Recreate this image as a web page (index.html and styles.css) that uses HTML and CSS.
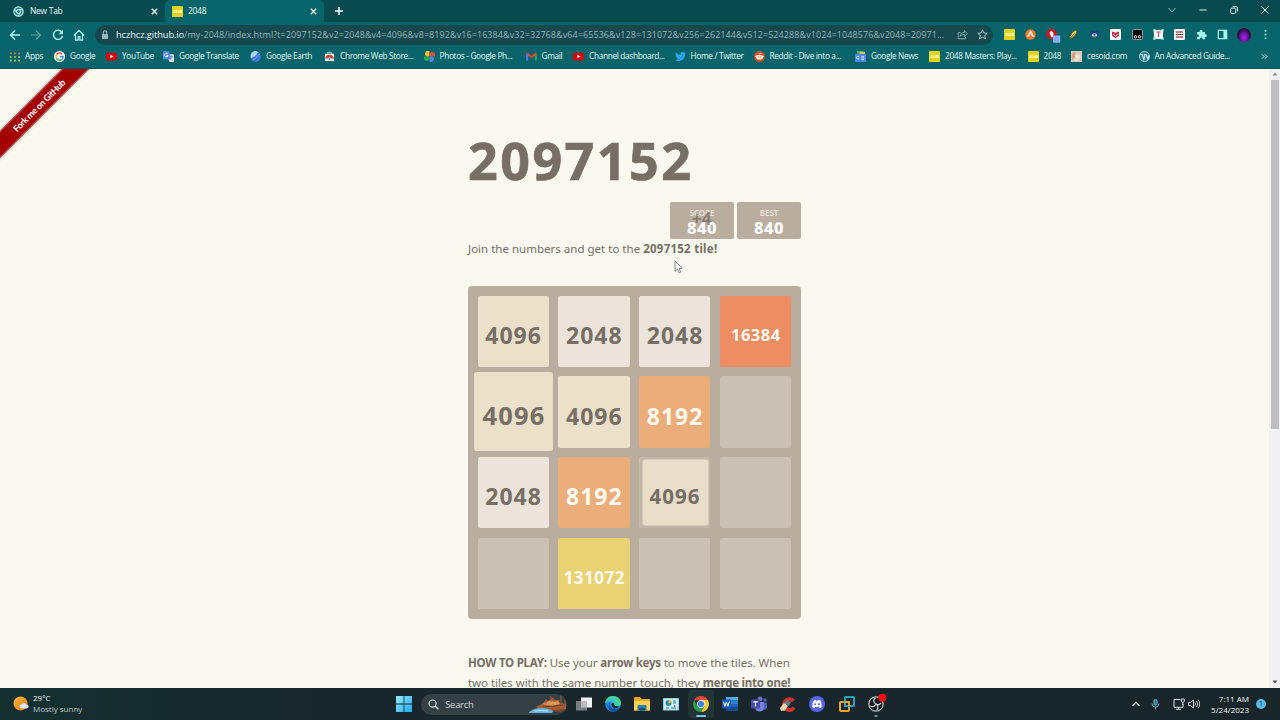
FILE: index.html
```html
<!DOCTYPE html>
<html lang="en">
<head>
<meta charset="utf-8">
<title>2048</title>
<link rel="stylesheet" href="styles.css">
</head>
<body>
<svg class="defs" aria-hidden="true">
  <symbol id="i2048" viewBox="0 0 12 12"><rect width="12" height="12" rx=".5" fill="#e4d21c"/><text x="6" y="7.7" text-anchor="middle" font-size="4.6" font-weight="700" textLength="10" fill="#fffbd0">2048</text></symbol>
  <symbol id="yt" viewBox="0 0 12 12"><rect x="0" y="1.8" width="12" height="8.6" rx="2" fill="#d8000d"/><path d="M4.7 4v4l3.4-2z" fill="#fff"/></symbol>
  <symbol id="close" viewBox="0 0 10 10"><path d="M2 2l6 6M8 2l-6 6" stroke="#e6fbfa" stroke-width="1.5"/></symbol>
</svg>
<div class="screen">
<header class="browser">
  <div class="tabs">
    <div class="tab idle">
      <svg class="fav" viewBox="0 0 12 12"><circle cx="6" cy="6" r="5" fill="#2b7f82" stroke="#b7f4ee" stroke-width="1.4"/><circle cx="6" cy="6" r="2.1" fill="#0a5155" stroke="#c9fbf5" stroke-width="1.2"/><path d="M6 3.9h4.5M4.2 7L2 3.3M7.8 7l-2.1 4" stroke="#b7f4ee"/></svg>
      <span>New Tab</span><svg class="x"><use href="#close"/></svg>
    </div>
    <div class="tab active">
      <svg class="fav"><use href="#i2048"/></svg>
      <span>2048</span><svg class="x"><use href="#close"/></svg>
    </div>
    <svg class="plus" viewBox="0 0 10 10"><path d="M5 1v8M1 5h8" stroke="#eefdfc" stroke-width="1.5"/></svg>
    <div class="wbtns">
      <svg viewBox="0 0 10 10"><path d="M1.5 3L5 6.8 8.500 3" fill="none" stroke="#9fc9c9"/></svg>
      <svg viewBox="0 0 10 10"><path d="M1.500 5h7" stroke="#d6e9e9"/></svg>
      <svg viewBox="0 0 10 10"><rect x="1.700" y="3.200" width="5" height="5.200" rx="1" fill="none" stroke="#d6e9e9"/><path d="M3.500 1.700h3.700q1.200 0 1.200 1.200v3.600" fill="none" stroke="#d6e9e9"/></svg>
      <svg viewBox="0 0 10 10"><path d="M1.500 1.500l7 7M8.500 1.500l-7 7" stroke="#e4f2f2"/></svg>
    </div>
  </div>
  <div class="toolbar">
    <div class="nav">
      <svg viewBox="0 0 12 12"><path d="M11 6H2M6 1.500L1.500 6 6 10.500" fill="none" stroke="#aef7ef" stroke-width="1.400"/></svg>
      <svg viewBox="0 0 12 12"><path d="M1 6h9M6 1.500L10.500 6 6 10.500" fill="none" stroke="#5aa5a3" stroke-width="1.200"/></svg>
      <svg viewBox="0 0 12 12"><path d="M10 3.400A4.600 4.600 0 1 0 10.500 7" fill="none" stroke="#aef7ef" stroke-width="1.400"/><path d="M10.900 .8v4.400H6.600z" fill="#aef7ef"/></svg>
      <svg viewBox="0 0 12 12"><path d="M.8 6.500L6 1.300l5.200 5.200M2.500 5.500v5.700h2.600V7.600h1.800v3.600h2.600V5.500" fill="none" stroke="#aef7ef" stroke-width="1.200"/></svg>
    </div>
    <div class="omni">
      <svg class="lock" viewBox="0 0 8 10"><rect x="1" y="4" width="6" height="5" rx=".6" fill="#9db7b9"/><path d="M2.300 4.300V2.600a1.700 1.700 0 0 1 3.400 0v1.700" fill="none" stroke="#9db7b9" stroke-width="1.100"/></svg>
      <span class="url"><b>hczhcz.github.io</b>/my-2048/index.html?t=2097152&amp;v2=2048&amp;v4=4096&amp;v8=8192&amp;v16=16384&amp;v32=32768&amp;v64=65536&amp;v128=131072&amp;v256=262144&amp;v512=524288&amp;v1024=1048576&amp;v2048=20971...</span>
      <div class="omni-act">
        <svg viewBox="0 0 12 12"><path d="M4 4H1.300v6.700h8V8.500M3.500 8c.3-3 2-4.300 4.500-4.300V1.500L11.300 5 8 8V6C6 6 4.500 6.500 3.500 8z" fill="none" stroke="#88b1b3" stroke-width="1"/></svg>
        <svg viewBox="0 0 12 12"><path d="M6 1l1.500 3.300 3.600.4-2.700 2.400.8 3.600L6 8.900l-3.200 1.800.8-3.600L.9 4.700l3.600-.4z" fill="none" stroke="#a8d4d4" stroke-width="1"/></svg>
      </div>
    </div>
    <div class="ext">
      <svg><use href="#i2048"/></svg>
      <svg viewBox="0 0 12 12"><circle cx="6" cy="6" r="5.700" fill="#f17a28"/><path d="M2 8.500L5.600 2q2-.5 1.600 1l3 5.500H7.800L6 5.300 4.300 8.500z" fill="#ffe6cf"/></svg>
      <svg viewBox="0 0 12 12" overflow="visible"><circle cx="5" cy="5.500" r="5.700" fill="#d3131b"/><path d="M3 5V3.500l1.400-1.300 1 .4 1.300.8.5 3-1 2.600H4.500z" fill="#f8f3f1"/><rect x="6.500" y="7" width="8" height="8" rx="1" fill="#84aef5"/></svg>
      <svg viewBox="0 0 12 12"><path d="M2 8.500Q4 3 8.500 1l1.300 2Q9 7 3.500 10.600z" fill="#ead13d" stroke="#514427" stroke-width=".7"/><path d="M2 11l1.500-2L7 5" stroke="#795522" fill="none"/></svg>
      <svg viewBox="0 0 12 12"><rect x="1.500" y="2" width="9" height="8" fill="#18487c"/><path d="M3 7.500a3 3 0 1 1 6 0z" fill="#cfdde0"/><path d="M3.800 8.500h4.500" stroke="#c6af40"/><circle cx="6" cy="6.300" r="1.200" fill="#213f9b"/></svg>
      <svg viewBox="0 0 12 12"><rect width="12" height="12" rx="1" fill="#fffafa"/><path d="M2.300 2.700L6 4.100l3.700-1.400v4.700L6 9.700 2.300 7.400z" fill="#c11932"/><path d="M4.200 5v1.700L6 7.800l1.800-1.100V5" fill="none" stroke="#fff"/></svg>
      <svg viewBox="0 0 12 12"><rect x=".5" y=".5" width="11" height="11" rx="1.500" fill="#040607" stroke="#94abad"/><circle cx="3.800" cy="8.500" r="1.300" fill="none" stroke="#fff"/><circle cx="8.200" cy="8.500" r="1.300" fill="none" stroke="#fff"/></svg>
      <svg viewBox="0 0 12 12"><rect x="1" y="1" width="10" height="10" fill="#f7fcfc"/><path d="M3.500 3.300h5M6 3.300v5.500" stroke="#e04550" stroke-width="1.200"/><path d="M.3.300h2.400v2.400H.3zM9.300.300h2.400v2.400H9.300zM.3 9.300h2.400v2.400H.3zM9.300 9.300h2.400v2.400H9.300z" fill="#b8e7f1"/></svg>
      <svg viewBox="0 0 12 12"><rect width="12" height="12" rx="1" fill="#fff8f5"/><path d="M2 3.300h8M2 6h8M2 8.800h8" stroke="#3c3436" stroke-width="1.200"/><path d="M7 2.500v1.700M4 5.200V7M8 8v1.700" stroke="#ed4a4a" stroke-width="1.500"/></svg>
      <svg viewBox="0 0 12 12"><path d="M1.200 3.300h2.900V2.500a1.500 1.500 0 0 1 3 0v.8h2.700v2.500h.5a1.500 1.500 0 0 1 0 3h-.5v2.500H7.200v-.7a1.400 1.400 0 0 0-2.800 0v.7H1.200V8.700H2a1.400 1.400 0 0 0 0-2.800h-.8z" fill="#a5f6ee"/></svg>
      <svg viewBox="0 0 12 12"><rect x="1.500" y="1.500" width="9" height="9" fill="none" stroke="#a5f6ee" stroke-width="1.400"/><path d="M7 1.500h3.500v9H7z" fill="#a5f6ee"/></svg>
      <i class="avatar"></i>
      <svg viewBox="0 0 12 12"><circle cx="6" cy="2" r="1.100" fill="#a5f6ee"/><circle cx="6" cy="6" r="1.100" fill="#a5f6ee"/><circle cx="6" cy="10" r="1.100" fill="#a5f6ee"/></svg>
    </div>
  </div>
  <nav class="bookmarks">
    <a><svg viewBox="0 0 12 12"><g stroke-width="2" stroke-dasharray="2 2.500"><path d="M1 2.500h11" stroke="#d56a54"/><path d="M1 6.500h11" stroke="#80bd65"/><path d="M1 10.500h11" stroke="#cfc04b"/></g></svg>Apps</a>
    <a><svg viewBox="0 0 12 12"><circle cx="6" cy="6" r="6" fill="#fff"/><g fill="none" stroke-width="1.600"><path d="M8.700 3.400A3.800 3.800 0 0 0 2.700 4" stroke="#e8453c"/><path d="M2.700 4a3.800 3.800 0 0 0 0 4" stroke="#f5bd28"/><path d="M2.700 8a3.800 3.800 0 0 0 6 .9" stroke="#36a852"/><path d="M8.700 8.900A4 4 0 0 0 9.800 6H6.200" stroke="#4285f4"/></g></svg>Google</a>
    <a><svg><use href="#yt"/></svg>YouTube</a>
    <a><svg viewBox="0 0 12 12"><path d="M4 3.500h7q1 0 1 1V12H7z" fill="#dce2e6"/><path d="M0 1q0-1 1-1h5.500L9 9H1Q0 9 0 8z" fill="#4b86ef"/><path d="M5.200 3.300A2 2 0 1 0 5.500 5H4" fill="none" stroke="#fff"/><path d="M7.300 6h3.500M9 5v1M10.300 6Q9.500 8.500 8 9.500" fill="none" stroke="#6c7d8d" stroke-width=".7"/></svg>Google Translate</a>
    <a><svg viewBox="0 0 12 12"><circle cx="6" cy="6" r="5.800" fill="#3979df"/><path d="M.8 4Q4-2 9 1.300 6 6 1 8z" fill="#b2d2fb"/><path d="M3 10Q7 8 10.500 3" stroke="#80acf0" fill="none"/></svg>Google Earth</a>
    <a><svg viewBox="0 0 12 12"><path d="M1 3h10v8H1z" fill="#f2f2ee"/><path d="M4 3V1.500h4V3" fill="none" stroke="#cdd7d5"/><path d="M1.500 8.500a4.500 4.500 0 0 1 9 0z" fill="#d8422e"/><path d="M2.500 9.500h7" stroke="#dfe7df" stroke-width="2"/><circle cx="6" cy="8.700" r="1.500" fill="#4e86db" stroke="#fff" stroke-width=".6"/></svg>Chrome Web Store...</a>
    <a><svg viewBox="0 0 12 12"><path d="M6 0v6h-3A3 3 0 0 1 6 0" fill="#f5bc25"/><path d="M12 6H6V3a3 3 0 0 1 6 3" fill="#e84c3d"/><path d="M6 12V6h3a3 3 0 0 1-3 6" fill="#4386f4"/><path d="M0 6h6v3a3 3 0 0 1-6-3" fill="#32a653"/></svg>Photos - Google Ph...</a>
    <a><svg viewBox="0 0 12 12"><path d="M1.300 10.500v-8" stroke="#4285f4" stroke-width="2.200"/><path d="M10.700 10.500v-8" stroke="#34a853" stroke-width="2.200"/><path d="M1 2.500l5 4 5-4" fill="none" stroke="#e64435" stroke-width="2.200"/></svg>Gmail</a>
    <a><svg><use href="#yt"/></svg>Channel dashboard...</a>
    <a><svg viewBox="0 0 12 12"><path d="M0 9.700q2 .1 3.500-1Q1.500 8.300 1.300 7h1Q.5 6.200.600 4.300l1 .3Q0 3 .9 1.500 3 4 6 4.100 5.600 1 8.300 1q1 0 1.800.8L11.600 1.200l-.9 1.500L12 2.500l-1.200 1.400Q10.800 10.700 4 11 2 11 0 9.700z" fill="#2ba3ec"/></svg>Home / Twitter</a>
    <a><svg viewBox="0 0 12 12"><circle cx="6" cy="6" r="5.900" fill="#e64a21"/><ellipse cx="6" cy="6.900" rx="3.700" ry="2.500" fill="#fff"/><circle cx="2.400" cy="5.800" r="1" fill="#fff"/><circle cx="9.600" cy="5.800" r="1" fill="#fff"/><path d="M6 4.500l.5-2 2 .3" fill="none" stroke="#fff" stroke-width=".7"/><circle cx="4.600" cy="6.500" r=".7" fill="#e64a21"/><circle cx="7.400" cy="6.500" r=".7" fill="#e64a21"/></svg>Reddit - Dive into a...</a>
    <a><svg viewBox="0 0 12 12"><path d="M2 0h7v4H2z" fill="#46ad5c"/><path d="M5 1h6v5H5z" fill="#efc33e"/><path d="M0 3h12v9H0z" fill="#4a85ec"/><path d="M4.300 6.300A1.500 1.500 0 1 0 4.500 8H3.500M7 6.200h3M7 7.800h3M7 9.400h3" fill="none" stroke="#f5f8ff" stroke-width=".9"/></svg>Google News</a>
    <a><svg><use href="#i2048"/></svg>2048 Masters: Play...</a>
    <a><svg><use href="#i2048"/></svg>2048</a>
    <a><svg viewBox="0 0 12 12"><path d="M0 0h12v12H0z" fill="#dacabb"/><path d="M1 3l3-2 2 3-3 4-2 3z" fill="#d89e83"/><path d="M5 3l6 2-4 6H4z" fill="#efe1d4"/></svg>cesoid.com</a>
    <a><svg viewBox="0 0 12 12"><circle cx="6" cy="6" r="5.500" fill="#287da0" stroke="#a4e2ed"/><path d="M1.500 3.700h2L5.300 9.300l1.200-4-.5-1.500h2l1.700 5.400 1-4.500" fill="none" stroke="#e1fafa" stroke-width="1.100"/></svg>An Advanced Guide...</a>
    <span class="more"><svg viewBox="0 0 8 8"><path d="M1 1.500L3.500 4 1 6.500M4.500 1.500L7 4 4.500 6.500" fill="none" stroke="#a5f6ee" stroke-width="1.100"/></svg></span>
  </nav>
</header>

<div class="viewport">
  <main class="page">
    <div class="ribbon">Fork me on GitHub</div>
    <div class="container">
      <h1>2097152</h1>
      <div class="scores">
        <div class="score"><small>SCORE</small><b>840</b><span class="add">+4</span></div>
        <div class="score"><small>BEST</small><b>840</b></div>
      </div>
      <p class="intro">Join the numbers and get to the <strong>2097152 tile!</strong></p>
      <div class="board">
        <div class="cell t4096">4096</div><div class="cell t2048">2048</div><div class="cell t2048">2048</div><div class="cell t16384">16384</div>
        <div class="cell t4096 merged">4096</div><div class="cell t4096">4096</div><div class="cell t8192">8192</div><div class="cell"></div>
        <div class="cell t2048">2048</div><div class="cell t8192">8192</div><div class="cell"><div class="tile-new">4096</div></div><div class="cell"></div>
        <div class="cell"></div><div class="cell t131072">131072</div><div class="cell"></div><div class="cell"></div>
      </div>
      <div class="how"><p><strong>HOW TO PLAY:</strong> <span>Use your</span> <strong>arrow keys</strong> to move the tiles. When</p><p>two tiles with the same number touch, they <strong>merge into one!</strong></p></div>
    </div>
    <svg class="cursor" viewBox="0 0 9 14"><path d="M1 .8v10.500l2.500-2.200 1.600 3.700 1.600-.7-1.600-3.600h3.100z" fill="#fff" stroke="#656565" stroke-width=".8"/></svg>
  </main>
  <aside class="scroll"><svg viewBox="0 0 6 4"><path d="M3 .5L5.500 3.500h-5z" fill="#8c8c8c"/></svg><i></i><svg viewBox="0 0 6 4"><path d="M3 3.500L5.500.5h-5z" fill="#555"/></svg></aside>
</div>

<footer class="taskbar">
  <div class="weather">
    <svg viewBox="0 0 16 16"><defs><linearGradient id="sun" x2=".7" y2="1"><stop stop-color="#f9bd3f"/><stop offset="1" stop-color="#e87d16"/></linearGradient></defs><circle cx="7.500" cy="7.500" r="7" fill="url(#sun)"/><path d="M8.500 12.500a2 2 0 0 1 0-4 3 3 0 0 1 5 0 2 2 0 0 1 .3 4z" fill="#dce7f6"/></svg>
    <div><p>29°C</p><p class="dim">Mostly sunny</p></div>
  </div>
  <div class="apps">
    <svg viewBox="0 0 16 16"><defs><linearGradient id="win" x2="1" y2="1"><stop stop-color="#8eeaff"/><stop offset="1" stop-color="#23a9ee"/></linearGradient></defs><path d="M0 0h7.600v7.600H0zM8.400 0H16v7.600H8.400zM0 8.400h7.600V16H0zM8.400 8.400H16V16H8.400z" fill="url(#win)"/></svg>
    <div class="search">
      <svg class="mag" viewBox="0 0 12 12"><circle cx="5" cy="5" r="3.900" fill="none" stroke="#dce4e5" stroke-width="1.300"/><path d="M8 8l3.300 3.300" stroke="#dce4e5" stroke-width="1.500"/></svg>
      <span>Search</span>
      <svg class="art" viewBox="0 0 38 18"><path d="M1 17Q5 12 13 12q10-1 23-3 2 5-3 8z" fill="#684632"/><path d="M7 12l6-3 4-4 3 1 3-4 3 3 4 0 1 3 6 1v5l-20 2z" fill="#a95a33"/><path d="M13 9l5-2 4-2 3 2 4-1 2 3-8 2z" fill="#d9975a"/><path d="M22 1v6M32 1v8M36 5v6M17 4v5" stroke="#9a5736"/><path d="M14 12l20-2" stroke="#67452f"/><path d="M0 17q6-4 11-4 8 0 13 3l-1 2H0z" fill="#62b5e5"/><path d="M5 16q8-1 14 0" stroke="#b6e2f5" fill="none"/></svg>
    </div>
    <svg viewBox="0 0 16 16"><rect x="5" y="1.500" width="11" height="10" fill="#f1f4f4"/><rect x="0" y="5" width="11" height="9.500" fill="#777f82"/><path d="M5 5h6v6.500H5z" fill="#b8bdbe"/></svg>
    <svg viewBox="0 0 16 16"><circle cx="8" cy="8" r="7.900" fill="#1684d8"/><path d="M.3 6Q2 0 8 .1q7 .2 7.900 6.500.2 4-4.300 4-3 0-2.600-2 1-4-3-4.300-3.500.2-5.700 3z" fill="#42d19b"/><path d="M2 5q5-4 8 0L9 8Q5 4 2 7z" fill="#35bbdf"/><path d="M4.500 7Q5 13 10 13q3 0 5-1.500-3 4.500-8 4.300Q2 13 4.500 7z" fill="#0d4e99"/><path d="M7 7q2-1 2 1.500 1 2.500 5.500 2-4 3-7 .5Q6 9 7 7z" fill="#18272b"/></svg>
    <svg viewBox="0 0 16 16"><path d="M0 2q0-1 1-1h5l1.500 2H15q1 0 1 1v10.500H0z" fill="#e5a829"/><path d="M0 5h16v9.500H0z" fill="#ffd24d"/><path d="M3.500 14.500V10q0-1 1-1h7q1 0 1 1v4.500z" fill="#237fb6"/><path d="M5 12h6v2.500H5z" fill="#155276"/></svg>
    <svg viewBox="0 0 16 16"><rect x="0" y="2" width="16" height="12.500" rx=".7" fill="#84d3ec"/><rect x="1" y="3" width="14" height="10.500" fill="#d3edf5"/><circle cx="5.500" cy="7" r="3" fill="#288ac1"/><path d="M5.500 7V3.500A3.500 3.500 0 0 1 9 7z" fill="#efb83c"/><path d="M10 5h3M10 7h3M3 12h3M8 12h5" stroke="#287c9d" stroke-width="1.200"/><path d="M11 9l2 1-2 1z" fill="#287c9d"/></svg>
    <div class="current"><svg viewBox="0 0 16 16"><path d="M1.100 4A8 8 0 0 1 14.900 4H8z" fill="#e94436"/><path d="M14.900 4A8 8 0 0 1 8 16l3.500-6L8 4z" fill="#f9c932"/><path d="M1.100 4A8 8 0 0 0 8 16l3.500-6h-7z" fill="#279d4d"/><circle cx="8" cy="8" r="3.900" fill="#f5f9fa"/><circle cx="8" cy="8" r="3.100" fill="#3a80df"/></svg></div>
    <svg viewBox="0 0 16 16"><path d="M4 1h12v3.500H4z" fill="#4cade7"/><path d="M4 4.500h12V8H4z" fill="#2c83d3"/><path d="M4 8h12v3.500H4z" fill="#1c65b9"/><path d="M4 11.500h12V15H4z" fill="#174b91"/><rect y="3.500" width="9" height="9" rx="1" fill="#1456ad"/><path d="M1.500 5.700l1.400 4.700 1.500-4.500 1.500 4.500 1.400-4.700" fill="none" stroke="#fff"/></svg>
    <svg viewBox="0 0 16 16"><circle cx="9" cy="3" r="2.500" fill="#6974d4"/><circle cx="14" cy="4" r="1.700" fill="#5360bd"/><path d="M11 6.500h5v5q-1 3-4 2z" fill="#5360bd"/><path d="M4 6h9v6q-1 4-5 3.500Q4 15 4 11z" fill="#7983de"/><rect y="3.500" width="9" height="9" rx="1" fill="#454ead"/><path d="M2.200 5.900h4.600M4.500 5.900v4.700" stroke="#fff" stroke-width="1.200"/></svg>
    <svg viewBox="0 0 16 16"><path d="M13.500 5A5.400 5.400 0 1 0 14 11.500" fill="none" stroke="#ca352e" stroke-width="4"/><path d="M7 3l4 3.500-2 3-4-3z" fill="#6d7275"/><path d="M4 7l4 3-3 4.500-4 .5-1-3z" fill="#efd6aa"/><path d="M5 6.500l4 3" stroke="#409dc0" stroke-width="1.500"/></svg>
    <svg viewBox="0 0 16 16"><circle cx="8" cy="8" r="8" fill="#5965e9"/><path d="M3.300 11q-.5-4 1.400-6.500l2-.7.500 1h1.600l.5-1 2 .7q2 2.500 1.400 6.500l-2 1.200-.8-1.300H6.100l-.8 1.300z" fill="#fff"/><circle cx="6.100" cy="8.200" r="1" fill="#5965e9"/><circle cx="9.900" cy="8.200" r="1" fill="#5965e9"/></svg>
    <svg viewBox="0 0 16 16"><g fill="none" stroke-width="2"><rect x="6" y="1" width="9" height="9" rx=".8" stroke="#21a4bb"/><rect x="1" y="6" width="9" height="9" rx=".8" stroke="#f0a322"/><path d="M6 5v5h5" stroke="#21a4bb"/><path d="M5.500 6H10v4" stroke="#f0a322"/></g></svg>
    <svg class="obs" viewBox="0 0 16 16"><circle cx="8" cy="8" r="7.200" fill="#171d20" stroke="#bfc5c6" stroke-width="1.200"/><g fill="none" stroke="#c4c9ca" stroke-width="1.300"><path d="M7.500 2q-4 3 .5 6 2.500 2 5-1"/><path d="M2 10q4 2 6-2"/><path d="M8 8q3 2 1 6"/></g><circle cx="14.300" cy="1.800" r="4" fill="#f20d12"/><path d="M6.500 20h3" stroke="#a5b0b2" stroke-width="1.500"/></svg>
  </div>
  <div class="tray">
    <svg class="up" viewBox="0 0 10 10"><path d="M1.500 6.700L5 3.300l3.500 3.400" fill="none" stroke="#eef3f4" stroke-width="1.300"/></svg>
    <svg class="mic" viewBox="0 0 10 12"><rect x="3.200" y="1" width="3.600" height="6.500" rx="1.800" fill="#2a7c90" stroke="#7fc2cd" stroke-width=".8"/><path d="M1.200 5.500q0 4 3.800 4t3.800-4M5 9.500V12" fill="none" stroke="#7fc2cd"/></svg>
    <svg class="net" viewBox="0 0 12 12"><path d="M7.500 1.500H1v7.800h9V6M3 11.300h5M5.500 9.500v2" fill="none" stroke="#d9e1e3"/><path d="M8.300 1h3v2.500l-1.500 1-1.500-1zM9.800 4v3" fill="none" stroke="#d9e1e3"/></svg>
    <svg class="vol" viewBox="0 0 12 12"><path d="M.7 4.300h2L5.500 2v8L2.700 7.700h-2z" fill="none" stroke="#d9e1e3"/><path d="M7 4.500q1.300 1.500 0 3M8.500 3q2.500 3 0 6M10 1.700q3.500 4.300 0 8.600" fill="none" stroke="#d9e1e3" stroke-width=".9"/></svg>
    <div class="clock"><p>7:11 AM</p><p>5/24/2023</p></div>
    <span class="badge">1</span>
  </div>
</footer>
</div>
</body>
</html>
```
FILE: styles.css
```css
* { box-sizing: border-box; }
body { margin: 0; font-family: "Open Sans", "Noto Sans", sans-serif; }
p, h1 { margin: 0; }
svg { display: block; flex: none; }
.defs { position: absolute; width: 0; height: 0; }
.screen { width: 1280px; height: 720px; overflow: hidden; display: flex; flex-direction: column; }

.browser { height: 69px; flex: none; background: #06646a; color: #e4f6f6; border-bottom: 1px solid #145054; }
.tabs { height: 22px; display: flex; background: #074b50; font-size: 8.5px; }
.tab { display: flex; align-items: center; height: 22px; }
.tab span { flex: 1; margin-left: 6px; line-height: 22px; letter-spacing: -.3px; }
.tab.idle { width: 165px; padding: 0 6px 0 13px; }
.tab.active { width: 159px; padding: 0 6px 0 7px; background: #06646a; border-radius: 5px 5px 0 0; }
.tab.active span { margin-left: 5px; letter-spacing: -.3px; }
.fav { width: 11px; height: 11px; }
.x { width: 9px; height: 9px; }
.plus { width: 10px; height: 10px; margin: 6px 0 0 10px; }
.wbtns { margin-left: auto; display: flex; gap: 20.7px; padding: 5px 10.500px 0 0; }
.wbtns svg { width: 10px; height: 10px; }

.toolbar { height: 24px; display: flex; align-items: center; padding-top: 1px; }
.nav { width: 95px; display: flex; padding-left: 9px; gap: 9.400px; }
.nav svg { width: 12px; height: 12px; }
.omni { width: 898px; height: 20px; background: #15494f; border-radius: 10px; display: flex; align-items: center; padding: 0 5px 0 6px; }
.lock { width: 8px; height: 10px; }
.url { margin-left: 7px; font-size: 9px; line-height: 20px; white-space: nowrap; color: #93b5b8; letter-spacing: .08px; flex: 1; }
.url b { font-weight: 400; font-size: 9.300px; letter-spacing: -.1px; color: #e6f4f5; }
.omni-act { display: flex; gap: 9.500px; }
.omni-act svg { width: 11px; height: 11px; }
.ext { display: flex; align-items: center; gap: 10.300px; margin-left: 11px; }
.ext svg { width: 11px; height: 11px; }
.ext .avatar { width: 14px; height: 14px; margin: 0 -1.500px; border-radius: 50%; background: radial-gradient(ellipse at 50% 68%, #c515d1, #6318b3 35%, #35104f 55%, #23112b 75%); }

.bookmarks { height: 20px; display: grid; grid-template-columns: 45px 52px 57px 87px 74px 99.500px 102px 47.500px 101.500px 79px 101.500px 74px 98.500px 43.500px 67.500px 116px 1fr; align-items: center; padding: 0 10px 0 9px; font-size: 8.300px; letter-spacing: -.34px; }
.bookmarks a { display: flex; align-items: center; gap: 5px; white-space: nowrap; line-height: 20px; }
.bookmarks a svg { width: 11px; height: 11px; }
.more { justify-self: end; margin-right: 2px; }
.more svg { width: 7px; height: 7px; }

.viewport { height: 619px; flex: none; display: flex; background: #f9f9f0; }
.page { width: 1269px; height: 619px; position: relative; overflow: hidden; color: #776e65; font-family: "Noto Sans", sans-serif; }
.ribbon { position: absolute; left: -41.500px; top: 27px; width: 160px; height: 19px; transform: rotate(-45deg); background: #a40000; border-top: 1px solid #b9575a; border-bottom: 1px solid #b9575a; box-shadow: 0 0 3px rgba(0,0,0,.4); color: #fff; font: 700 9px/17px Lato, sans-serif; letter-spacing: -.42px; text-align: center; }
.container { width: 333px; margin-left: 468px; }
h1 { padding-top: 55px; height: 133px; font-size: 52px; line-height: 71px; font-weight: 700; letter-spacing: 2.450px; -webkit-text-stroke: .7px #776e65; }
.scores { display: flex; justify-content: flex-end; gap: 3px; }
.score { position: relative; width: 64px; height: 37px; border-radius: 2px; background: #b9ada0; display: flex; flex-direction: column; align-items: center; color: #fff; }
.score small { font-size: 8px; line-height: 11px; margin-top: 5px; color: #eee4da; font-weight: 600; letter-spacing: -.1px; }
.score b { font-size: 16.500px; line-height: 20px; letter-spacing: .5px; font-weight: 800; }
.add { position: absolute; left: 22px; top: 7px; font-size: 17px; line-height: 20px; font-weight: 600; color: rgba(105,97,88,.7); }
.intro { font-size: 11.500px; line-height: 19px; letter-spacing: .01px; white-space: nowrap; }
.intro strong { letter-spacing: .25px; }
.board { margin-top: 28px; width: 333px; height: 333px; padding: 9.700px; border-radius: 4px; background: #b9ada0; display: grid; grid-template-columns: repeat(4, 71.300px); grid-auto-rows: 71.300px; gap: 9.450px; }
.cell { display: flex; align-items: center; justify-content: center; border-radius: 2px; background: #cac0b4; font-size: 23px; font-weight: 700; letter-spacing: 1px; padding: 7px 0 0 .5px; }
.cell.t2048 { background: #ece3da; }
.cell.t4096 { background: #ebe0c9; }
.cell.t8192 { background: #ebad79; color: #fffaf0; }
.cell.t16384 { background: #ec8d64; color: #fffaf0; font-size: 16.500px; letter-spacing: .500px; }
.cell.t131072 { background: #e8d273; color: #fffaf0; font-size: 17px; letter-spacing: .500px; }
.merged { transform: scale(1.11); }
.tile-new { width: 65px; height: 65px; margin-top: -7px; padding-top: 6px; border-radius: 2px; background: #e9dec9; box-shadow: 0 0 2px 1px #ddd2c1, 0 0 3px 3px #b9ada0; display: flex; align-items: center; justify-content: center; font-size: 20.500px; }
.how { margin-top: 34px; font-size: 11.500px; line-height: 20px; letter-spacing: -.05px; white-space: nowrap; }
.how strong { letter-spacing: -.24px; }
.cursor { position: absolute; left: 674px; top: 191px; width: 9px; height: 14px; }
.scroll { width: 11px; background: #f1f1f1; display: flex; flex-direction: column; align-items: center; padding: 3px 0 4px; }
.scroll svg { width: 6px; height: 4px; }
.scroll i { width: 8px; height: 349px; margin: 4px 0 auto; background: #bfbfbf; }

.taskbar { height: 32px; display: flex; position: relative; background: linear-gradient(90deg, #15302f, #18272c 25%, #18262a); color: #f1f6f6; }
.weather { width: 394px; display: flex; padding: 4px 0 0 13px; font-size: 8px; }
.weather svg { width: 16px; height: 16px; margin: 4px 4px 0 0; }
.weather p { line-height: 11px; }
.dim { color: #bac8ca; }
.apps { display: flex; align-items: center; gap: 13.200px; padding-left: 2px; }
.apps > svg { width: 16px; height: 16px; }
.search { width: 146px; height: 21px; margin: 0 -4.500px 0 -4px; border-radius: 11px; background: #344044; display: flex; align-items: center; font-size: 9.500px; letter-spacing: -.3px; padding-left: 7px; overflow: hidden; color: #cbd3d5; }
.mag { width: 11px; height: 11px; margin-right: 6px; }
.art { width: 38px; height: 18px; margin-left: auto; }
.current { width: 26px; height: 28px; margin: 0 -5px; padding: 6px 5px 0; border-radius: 3px; background: #233437; position: relative; }
.current svg { width: 16px; height: 16px; }
.current::after { content: ""; position: absolute; left: 8px; bottom: 1px; width: 10px; height: 2px; border-radius: 1px; background: #73c8e2; }
.obs { overflow: visible; }
.tray { margin-left: auto; display: flex; align-items: center; padding-right: 14px; font-size: 8px; }
.up { width: 10px; height: 10px; margin-right: 10px; }
.mic { width: 9px; height: 12px; margin-right: 13px; }
.net { width: 12px; height: 12px; margin-right: 3px; }
.vol { width: 12px; height: 12px; margin-right: 11px; }
.clock { width: 38px; text-align: right; white-space: nowrap; }
.clock p { line-height: 11px; }
.badge { width: 10px; height: 10px; margin-left: 7px; border-radius: 50%; background: #57b9e8; color: #16333e; line-height: 10px; text-align: center; font-size: 7px; }
```
